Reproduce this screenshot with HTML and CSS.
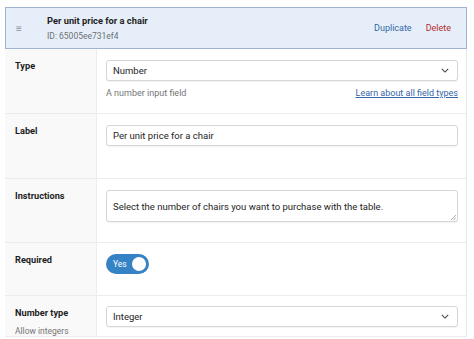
FILE: index.html
```html
<!DOCTYPE html>
<html lang="en">
<head>
<meta charset="utf-8">
<title>Field editor</title>
<link rel="stylesheet" href="styles.css">
</head>
<body>
<div class="field">
  <div class="field-head">
    <span class="handle">&#8801;</span>
    <div class="head-text">
      <div class="head-title">Per unit price for a chair</div>
      <div class="head-id">ID: 65005ee731ef4</div>
    </div>
    <a class="act dup" href="#">Duplicate</a>
    <a class="act del" href="#">Delete</a>
  </div>

  <div class="row row-type">
    <div class="lab"><div class="lab-name">Type</div></div>
    <div class="ctl">
      <div class="select"><span>Number</span><svg class="chev" viewBox="0 0 10 6" width="8" height="5"><path d="M1 1l4 4 4-4" fill="none" stroke="#444" stroke-width="1.3"/></svg></div>
      <div class="help">
        <span>A number input field</span>
        <a class="learn" href="#">Learn about all field types</a>
      </div>
    </div>
  </div>

  <div class="row row-label">
    <div class="lab"><div class="lab-name">Label</div></div>
    <div class="ctl">
      <div class="input">Per unit price for a chair</div>
    </div>
  </div>

  <div class="row row-instr">
    <div class="lab"><div class="lab-name">Instructions</div></div>
    <div class="ctl">
      <div class="input textarea">Select the number of chairs you want to purchase with the table.
        <svg class="grip" viewBox="0 0 6 6" width="6" height="6"><path d="M1 6L6 1M3.5 6L6 3.5" stroke="#999" stroke-width="0.8"/></svg>
      </div>
    </div>
  </div>

  <div class="row row-req">
    <div class="lab"><div class="lab-name">Required</div></div>
    <div class="ctl">
      <div class="toggle"><span class="toggle-txt">Yes</span><span class="knob"></span></div>
    </div>
  </div>

  <div class="row row-last">
    <div class="lab">
      <div class="lab-name">Number type</div>
      <div class="lab-sub">Allow integers</div>
    </div>
    <div class="ctl">
      <div class="select"><span>Integer</span><svg class="chev" viewBox="0 0 10 6" width="8" height="5"><path d="M1 1l4 4 4-4" fill="none" stroke="#444" stroke-width="1.3"/></svg></div>
    </div>
  </div>
</div>
</body>
</html>
```

FILE: styles.css
```css
html, body {
  margin: 0;
  padding: 0;
  background: #ffffff;
}
body {
  font-family: Roboto, "Liberation Sans", sans-serif;
  font-size: 9px;
  color: #1e1e1e;
}
.field {
  margin: 7px 0 0 5px;
  width: 462px;
}
.field-head {
  display: flex;
  align-items: center;
  height: 40px;
  background: #e6eff9;
  border: 1px solid #9fb5cf;
  padding: 0 15px 0 9px;
}
.handle {
  width: 31px;
  color: #8a8f96;
  font-size: 10px;
  padding-left: 1px;
}
.head-text {
  flex: 1;
  display: flex;
  flex-direction: column;
  gap: 5px;
}
.head-title {
  font-weight: 700;
  font-size: 9.3px;
  color: #1e1e1e;
}
.head-id {
  font-size: 8.5px;
  color: #6c7177;
}
.act {
  text-decoration: none;
  font-size: 9px;
}
.dup {
  color: #3467a7;
  margin-right: 14px;
}
.del {
  color: #b32d2e;
}
.row {
  display: grid;
  grid-template-columns: 92px 1fr;
  border-bottom: 1px solid #ececec;
  border-right: 1px solid #e6e6e6;
}
.row-type, .row-label {
  height: 64px;
}
.row-instr {
  height: 63px;
}
.row-req {
  height: 52px;
}
.lab {
  background: #f9f9f9;
  border-right: 1px solid #ececec;
  padding: 11px 10px 0;
}
.lab-name {
  font-weight: 700;
  font-size: 9.2px;
  line-height: 12px;
}
.lab-sub {
  margin-top: 7px;
  font-size: 8.5px;
  color: #757575;
}
.ctl {
  padding: 11px 8px 0 9px;
}
.select, .input {
  height: 21px;
  box-sizing: border-box;
  border: 1px solid #d6d6d6;
  border-radius: 3px;
  box-shadow: 0 1px 1px rgba(0,0,0,0.05);
  display: flex;
  align-items: center;
  padding: 0 6px;
  font-size: 9.5px;
  color: #1e1e1e;
  background: #fff;
}
.select {
  justify-content: space-between;
}
.chev {
  margin-right: 2px;
}
.help {
  display: flex;
  justify-content: space-between;
  margin-top: 7px;
  font-size: 9px;
  color: #757575;
}
.learn {
  color: #3467a7;
  text-decoration: underline;
}
.textarea {
  height: 32px;
  position: relative;
}
.grip {
  position: absolute;
  right: 1px;
  bottom: 1px;
}
.toggle {
  width: 43px;
  height: 20px;
  box-sizing: border-box;
  border-radius: 10px;
  background: #3582c4;
  display: flex;
  align-items: center;
  justify-content: space-between;
  padding: 0 3px 0 7px;
}
.toggle-txt {
  color: #fff;
  font-size: 8.5px;
}
.knob {
  width: 14px;
  height: 14px;
  border-radius: 50%;
  background: #fff;
}
.row-last .ctl {
  padding-top: 10px;
}
```
